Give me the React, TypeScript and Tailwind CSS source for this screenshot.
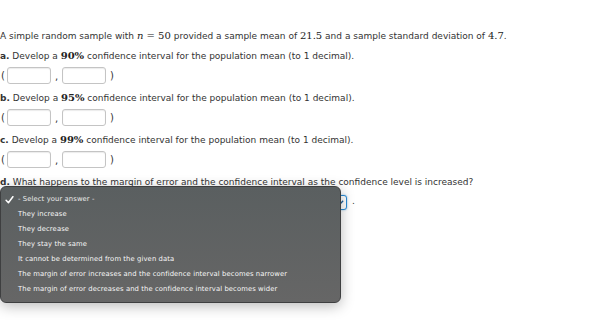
import React from 'react';

const body = { fontFamily: '"DejaVu Sans", Verdana, sans-serif' };
const math = { fontFamily: '"DejaVu Serif", "Liberation Serif", serif' };

const Box = () => (
    <span className="inline-block w-[44px] h-[17px] bg-white border border-[#c4c4c4] rounded-[3px] shadow-[inset_0_1px_1px_rgba(0,0,0,0.08)]" />
);

const IntervalRow = () => (
    <div className="h-[22px] flex items-start pt-[1px] text-[10px] text-[#333]">
        <span className="w-[7px] pl-[1px] leading-[17px]">(</span>
        <Box />
        <span className="w-[11px] text-center leading-[19px]">,</span>
        <Box />
        <span className="pl-[4px] leading-[17px]">)</span>
    </div>
);

const Question = ({ letter, pct }: { letter: string; pct: string }) => (
    <p className="h-[20px] leading-[20px] text-[9px] text-[#333] whitespace-nowrap">
        <span className="font-bold">{letter}.</span> Develop a{' '}
        <span style={math} className="text-[10px] font-bold text-[#222]">{pct}%</span>{' '}
        confidence interval for the population mean (to 1 decimal).
    </p>
);

const options = [
    'They increase',
    'They decrease',
    'They stay the same',
    'It cannot be determined from the given data',
    'The margin of error increases and the confidence interval becomes narrower',
    'The margin of error decreases and the confidence interval becomes wider',
];

export default function App() {
    return (
        <div style={body} className="relative w-[600px] h-[323px] bg-white pt-[26px] overflow-hidden">
            <p className="h-[20px] leading-[20px] text-[9px] text-[#333] whitespace-nowrap">
                A simple random sample with{' '}
                <span style={math} className="text-[10px] italic text-[#222]">n</span>
                <span style={math} className="text-[10px] text-[#222]"> = 50</span> provided a sample mean of{' '}
                <span style={math} className="text-[10px] text-[#222]">21.5</span> and a sample standard deviation of{' '}
                <span style={math} className="text-[10px] text-[#222]">4.7</span>.
            </p>

            <Question letter="a" pct="90" />
            <IntervalRow />
            <Question letter="b" pct="95" />
            <IntervalRow />
            <Question letter="c" pct="99" />
            <IntervalRow />

            <p className="h-[20px] leading-[20px] text-[9px] text-[#333] whitespace-nowrap">
                <span className="font-bold">d.</span> What happens to the margin of error and the confidence interval as the confidence level is increased?
            </p>
            <div className="flex items-center h-[20px] pl-[8px]">
                <div className="w-[339px] h-[15px] bg-white border border-[#2a8ad4] rounded-[3px] flex items-center justify-end pr-[2px] shadow-[0_0_2px_rgba(42,138,212,0.6)]">
                    <svg width="5" height="5" viewBox="0 0 6 6">
                        <path d="M1 5 L5 1" stroke="#1f5f9a" strokeWidth="1.6" />
                    </svg>
                </div>
                <span className="ml-[5px] text-[9px] text-[#333]">.</span>
            </div>

            {/* open select menu */}
            <div className="absolute left-0 top-[186px] w-[341px] h-[117px] rounded-[6px] bg-gradient-to-b from-[#5a5f60] to-[#666666] border border-[#3e3f40] shadow-[0_3px_14px_rgba(0,0,0,0.28)] py-[5px] text-[6.8px] text-[#f7f7f7] tracking-[0.1px]">
                <div className="h-[15px] flex items-center">
                    <span className="w-[17px] flex justify-center">
                        <svg width="9" height="8" viewBox="0 0 10 9">
                            <path d="M1.2 4.8 L3.8 7.6 L8.8 0.8" fill="none" stroke="#fff" strokeWidth="1.7" strokeLinecap="round" strokeLinejoin="round" />
                        </svg>
                    </span>
                    <span className="text-[#ececec]">- Select your answer -</span>
                </div>
                {options.map((o) => (
                    <div key={o} className="h-[15px] flex items-center pl-[17px] whitespace-nowrap">
                        {o}
                    </div>
                ))}
            </div>
        </div>
    );
}
